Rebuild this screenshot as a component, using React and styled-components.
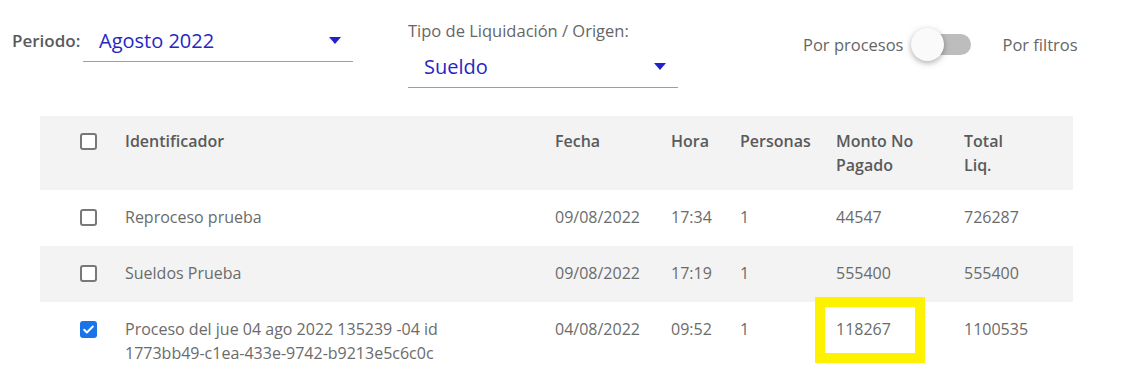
import React from 'react'
import styled, { createGlobalStyle } from 'styled-components'

const GlobalStyle = createGlobalStyle`
  body {
    margin: 0;
    background: #ffffff;
    font-family: "Open Sans", "Noto Sans", sans-serif;
  }
`

const rows = [
  { id: 'Reproceso prueba', fecha: '09/08/2022', hora: '17:34', personas: '1', monto: '44547', total: '726287' },
  { id: 'Sueldos Prueba', fecha: '09/08/2022', hora: '17:19', personas: '1', monto: '555400', total: '555400' },
  {
    id: 'Proceso del jue 04 ago 2022 135239 -04 id 1773bb49-c1ea-433e-9742-b9213e5c6c0c',
    fecha: '04/08/2022', hora: '09:52', personas: '1', monto: '118267', total: '1100535',
    checked: true, marked: true,
  },
]

function Check({ checked }) {
  return (
    <Box checked={checked}>
      {checked && (
        <svg width="13" height="13" viewBox="0 0 24 24">
          <path d="M4 12.5l5 5L20 6.5" fill="none" stroke="#fff" strokeWidth="3.6" strokeLinecap="round" strokeLinejoin="round" />
        </svg>
      )}
    </Box>
  )
}

function Select({ value }) {
  return (
    <SelectBox>
      <SelectValue>{value}</SelectValue>
      <Caret />
    </SelectBox>
  )
}

export default function App() {
  return (
    <Page>
      <GlobalStyle />
      <Filters>
        <PeriodGroup>
          <PeriodLabel>Periodo:</PeriodLabel>
          <Select value="Agosto 2022" />
        </PeriodGroup>
        <TypeGroup>
          <TypeLabel>Tipo de Liquidación / Origen:</TypeLabel>
          <Select value="Sueldo" />
        </TypeGroup>
        <ToggleGroup>
          <ToggleText>Por procesos</ToggleText>
          <Switch>
            <Track />
            <Thumb />
          </Switch>
          <ToggleText>Por filtros</ToggleText>
        </ToggleGroup>
      </Filters>

      <Table>
        <HeaderRow>
          <Cell><Check /></Cell>
          <HeadCell>Identificador</HeadCell>
          <HeadCell>Fecha</HeadCell>
          <HeadCell>Hora</HeadCell>
          <HeadCell>Personas</HeadCell>
          <HeadCell>Monto No<br />Pagado</HeadCell>
          <HeadCell>Total<br />Liq.</HeadCell>
        </HeaderRow>
        {rows.map((r, i) => (
          <Row key={r.id} striped={i % 2 === 1}>
            <Cell><Check checked={r.checked} /></Cell>
            <IdCell>{r.id}</IdCell>
            <Cell>{r.fecha}</Cell>
            <Cell>{r.hora}</Cell>
            <Cell>{r.personas}</Cell>
            <Cell>
              {r.monto}
              {r.marked && <Highlight />}
            </Cell>
            <Cell>{r.total}</Cell>
          </Row>
        ))}
      </Table>
    </Page>
  )
}

const Page = styled.div`
  width: 1132px;
  height: 379px;
  overflow: hidden;
  position: relative;
`

const Filters = styled.div`
  display: flex;
  align-items: flex-start;
  height: 116px;
`

const PeriodGroup = styled.div`
  display: flex;
  align-items: flex-start;
  padding: 27px 0 0 12px;
`

const PeriodLabel = styled.div`
  font-size: 17px;
  font-weight: 600;
  color: #5a5a5a;
  line-height: 28px;
  width: 71px;
`

const TypeGroup = styled.div`
  display: flex;
  flex-direction: column;
  margin-left: 55px;
  padding-top: 18px;
`

const TypeLabel = styled.div`
  font-size: 16.5px;
  color: #666;
  line-height: 26px;
  margin-bottom: 9px;
`

const SelectBox = styled.div`
  width: 270px;
  height: 35px;
  box-sizing: border-box;
  border-bottom: 1.5px solid #9e9e9e;
  display: flex;
  align-items: flex-start;
  justify-content: space-between;
  padding: 0 12px 0 16px;
`

const SelectValue = styled.span`
  font-size: 20px;
  color: #2626c4;
  line-height: 28px;
`

const Caret = styled.span`
  margin-top: 10px;
  width: 0;
  height: 0;
  border-left: 6.5px solid transparent;
  border-right: 6.5px solid transparent;
  border-top: 7px solid #2222cc;
`

const ToggleGroup = styled.div`
  display: flex;
  align-items: center;
  margin-left: 125px;
  padding-top: 28px;
`

const ToggleText = styled.span`
  font-size: 16.5px;
  color: #666;
  line-height: 32px;
`

const Switch = styled.span`
  position: relative;
  width: 60px;
  height: 33px;
  margin: 0 31px 0 8px;
  display: flex;
  align-items: center;
`

const Track = styled.span`
  margin-left: 6px;
  width: 54px;
  height: 21px;
  border-radius: 11px;
  background: #bdbdbd;
`

const Thumb = styled.span`
  position: absolute;
  left: 0;
  top: 0;
  width: 33px;
  height: 33px;
  border-radius: 50%;
  background: #fafafa;
  box-shadow: 0 2px 5px rgba(0, 0, 0, 0.22), 0 2px 10px rgba(0, 0, 0, 0.12);
`

const Table = styled.div`
  margin-left: 40px;
  width: 1033px;
`

const grid = `
  display: grid;
  grid-template-columns: 85px 430px 116px 69px 96px 128px 109px;
`

const HeaderRow = styled.div`
  ${grid}
  background: #f3f3f3;
  height: 74px;
  box-sizing: border-box;
  padding-top: 13px;
`

const Row = styled.div`
  ${grid}
  background: ${p => (p.striped ? '#f3f3f3' : '#ffffff')};
  padding: 15px 0 17px;
`

const Cell = styled.div`
  position: relative;
  font-size: 16px;
  line-height: 24px;
  color: #6b6b6b;
  padding-right: 8px;
  &:first-child {
    padding-left: 40px;
  }
`

const IdCell = styled(Cell)`
  padding-right: 80px;
`

const HeadCell = styled(Cell)`
  color: #5a5a5a;
  font-weight: 600;
`

const Box = styled.span`
  display: flex;
  align-items: center;
  justify-content: center;
  margin-top: 4px;
  width: 17px;
  height: 17px;
  box-sizing: border-box;
  border-radius: 3px;
  border: ${p => (p.checked ? 'none' : '2px solid #787878')};
  background: ${p => (p.checked ? '#1a73e8' : '#fff')};
`

const Highlight = styled.span`
  position: absolute;
  left: -21px;
  top: -20px;
  width: 110px;
  height: 66px;
  box-sizing: border-box;
  border: 10px solid #fff200;
`
